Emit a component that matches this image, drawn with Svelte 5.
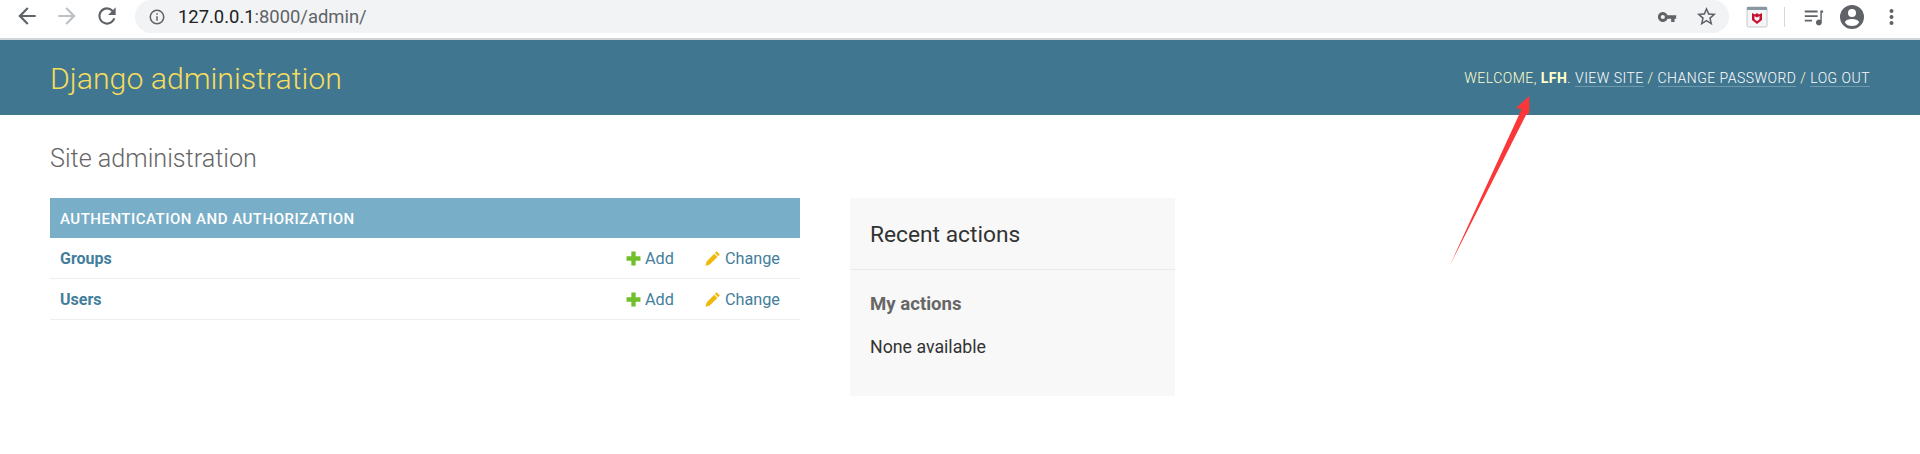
<script>
	const models = ['Groups', 'Users'];
</script>

<div class="page">
	<div class="toolbar">
		<div class="nav">
			<svg class="nav-icon" viewBox="0 0 24 24"><path d="M20 11H7.83l5.59-5.59L12 4l-8 8 8 8 1.41-1.41L7.83 13H20z" fill="#5f6368" /></svg>
			<svg class="nav-icon" viewBox="0 0 24 24"><path d="M12 4l-1.41 1.41L16.17 11H4v2h12.17l-5.58 5.59L12 20l8-8z" fill="#bdc1c6" /></svg>
			<svg class="nav-icon" viewBox="0 0 24 24"><path d="M17.65 6.35A7.96 7.96 0 0 0 12 4a8 8 0 1 0 7.73 10h-2.08A6 6 0 1 1 12 6c1.66 0 3.14.69 4.22 1.78L13 11h7V4z" fill="#5f6368" /></svg>
		</div>
		<div class="omnibox">
			<svg class="info" viewBox="0 0 24 24"><path d="M11 7h2v2h-2zm0 4h2v6h-2zm1-9a10 10 0 1 0 0 20 10 10 0 0 0 0-20zm0 18a8 8 0 1 1 0-16 8 8 0 0 1 0 16z" fill="#5f6368" /></svg>
			<span class="url"><span class="host">127.0.0.1</span>:8000/admin/</span>
			<span class="spacer"></span>
			<svg class="omni-icon" viewBox="0 0 24 24"><path d="M12.65 10A6 6 0 1 0 12.65 14H17v4h4v-4h2v-4zM7 14.5a2.5 2.5 0 1 1 0-5 2.5 2.5 0 0 1 0 5z" fill="#5f6368" /></svg>
			<svg class="omni-icon star" viewBox="0 0 24 24"><path d="M22 9.24l-7.19-.62L12 2 9.19 8.63 2 9.24l5.46 4.73L5.82 21 12 17.27 18.18 21l-1.63-7.03zM12 15.4l-3.76 2.27 1-4.28-3.32-2.88 4.38-.38L12 6.1l1.71 4.04 4.38.38-3.32 2.88 1 4.28z" fill="#5f6368" /></svg>
		</div>
		<div class="extensions">
			<svg class="ext" viewBox="0 0 22 22">
				<rect x="1" y="1" width="20" height="20" rx="1.5" fill="#f4f5f6" stroke="#c4c8cc" />
				<rect x="1" y="1" width="20" height="3" fill="#8a98a4" />
				<path d="M6 7l3 1.5L11 7l2 1.5L16 7v7l-5 4-5-4zM8.5 10v3.2l2.5 2 2.5-2V10L11 11.5z" fill="#c8102e" />
			</svg>
			<span class="divider"></span>
			<svg class="queue" viewBox="0 0 24 24"><path d="M3 5h14v2H3zm0 5h14v2H3zm0 5h8v2H3zM20 5h3v2.4h-1.4V18a3.2 3.2 0 1 1-1.6-2.8z" fill="#5f6368" /></svg>
			<svg class="avatar" viewBox="0 0 24 24"><path d="M12 0a12 12 0 1 0 0 24 12 12 0 0 0 0-24zm0 4a4 4 0 1 1 0 8 4 4 0 0 1 0-8zm0 17c-3 0-5.8-1.4-7-3.6C5 15.2 9.5 14 12 14s7 1.2 7 3.4c-1.2 2.2-4 3.6-7 3.6z" fill="#5f6368" /></svg>
			<svg class="menu" viewBox="0 0 4 18"><circle cx="2" cy="3" r="2" fill="#5f6368" /><circle cx="2" cy="9" r="2" fill="#5f6368" /><circle cx="2" cy="15" r="2" fill="#5f6368" /></svg>
		</div>
	</div>

	<header class="header">
		<div class="branding">Django administration</div>
		<div class="user-tools">
			Welcome, <strong>LFH</strong>.
			<a href="#site">View site</a> /
			<a href="#password">Change password</a> /
			<a href="#logout">Log out</a>
		</div>
	</header>

	<main class="content">
		<h1>Site administration</h1>
		<div class="columns">
			<div class="app-list">
				<div class="caption">Authentication and Authorization</div>
				{#each models as model}
					<div class="row">
						<a class="model" href="#model">{model}</a>
						<a class="action add" href="#add">
							<svg viewBox="0 0 14 14"><path d="M5 0.5h4v4.5h4.5v4H9v4.5H5V9H0.5V5H5z" fill="#70bf2b" /></svg>
							Add
						</a>
						<a class="action change" href="#change">
							<svg viewBox="0 0 14 14"><path d="M10.8.3l3 3-1.5 1.5-3-3zM8.6 2.5l3 3-7.2 7.2-4 1.2 1.1-4z" fill="#efb80b" /></svg>
							Change
						</a>
					</div>
				{/each}
			</div>

			<aside class="recent">
				<h2>Recent actions</h2>
				<div class="recent-body">
					<h3>My actions</h3>
					<p>None available</p>
				</div>
			</aside>
		</div>
	</main>

	<svg class="arrow" viewBox="0 0 90 175"><path d="M-1 170 L70.7 14 L64.7 13.3 L78.3 1 L78.3 18 L75 20 Z" fill="#fb3737" /></svg>
</div>

<style>
	:global(body) {
		margin: 0;
		background: #fff;
	}

	.page {
		position: relative;
		height: 454px;
		overflow: hidden;
		font-family: Roboto, "Liberation Sans", sans-serif;
		color: #333;
	}

	.toolbar {
		display: flex;
		align-items: flex-start;
		height: 38px;
		border-bottom: 2px solid #d2d5d8;
		background: #fff;
	}

	.nav {
		display: flex;
		gap: 14px;
		width: 135px;
		padding: 3px 0 0 14px;
		box-sizing: border-box;
	}

	.nav-icon {
		width: 26px;
		height: 26px;
	}

	.omnibox {
		display: flex;
		align-items: center;
		width: 1594px;
		height: 33px;
		padding: 0 11px 0 13px;
		box-sizing: border-box;
		background: #f1f3f4;
		border-radius: 17px;
	}

	.info {
		width: 18px;
		height: 18px;
		margin-right: 12px;
	}

	.url {
		font-size: 18.4px;
		color: #5f6368;
	}

	.host {
		color: #202124;
	}

	.spacer {
		flex: 1;
	}

	.omni-icon {
		width: 20px;
		height: 20px;
	}

	.star {
		width: 23px;
		height: 23px;
		margin-left: 18px;
	}

	.extensions {
		display: flex;
		align-items: center;
		height: 33px;
		padding-left: 17px;
	}

	.ext {
		width: 22px;
		height: 22px;
	}

	.divider {
		width: 1px;
		height: 20px;
		background: #d5d7da;
		margin: 0 17px 0 16px;
	}

	.queue {
		width: 22px;
		height: 22px;
	}

	.avatar {
		width: 24px;
		height: 24px;
		margin-left: 16px;
	}

	.menu {
		width: 5px;
		height: 18px;
		margin-left: 25px;
	}

	.header {
		display: flex;
		align-items: center;
		justify-content: space-between;
		height: 75px;
		padding: 1px 50px 0;
		background: #417690;
		box-sizing: border-box;
	}

	.branding {
		font-size: 30.25px;
		font-weight: 300;
		color: #f5dd5d;
	}

	.user-tools {
		font-size: 14px;
		font-weight: 300;
		letter-spacing: 0.47px;
		text-transform: uppercase;
		color: #ffc;
	}

	.user-tools strong {
		font-weight: 700;
	}

	.user-tools a {
		color: #fff;
		text-decoration: none;
		border-bottom: 1px solid rgba(255, 255, 255, 0.25);
	}

	.content {
		padding: 27px 50px 0;
	}

	h1 {
		margin: 0 0 23px;
		font-size: 25.2px;
		font-weight: 300;
		line-height: 33px;
		color: #666;
	}

	.columns {
		display: flex;
		gap: 50px;
		align-items: flex-start;
	}

	.app-list {
		width: 750px;
	}

	.caption {
		height: 40px;
		padding: 2px 10px 0;
		box-sizing: border-box;
		line-height: 38px;
		font-size: 15px;
		font-weight: 500;
		letter-spacing: 0.5px;
		text-transform: uppercase;
		color: #fff;
		background: #79aec8;
	}

	.row {
		display: flex;
		align-items: center;
		height: 41px;
		padding: 1px 20px 0 10px;
		border-bottom: 1px solid #eee;
		box-sizing: border-box;
		font-size: 16.25px;
	}

	.row a {
		text-decoration: none;
		color: #447e9b;
	}

	.row .model {
		flex: 1;
		font-weight: 700;
		font-size: 16px;
	}

	.action {
		display: flex;
		align-items: center;
		gap: 4px;
	}

	.action svg {
		width: 15px;
		height: 15px;
	}

	.change {
		gap: 5px;
		margin-left: 31px;
	}

	.recent {
		width: 325px;
		height: 198px;
		background: #f8f8f8;
	}

	h2 {
		margin: 0;
		height: 69px;
		padding: 2px 21px 0 20px;
		line-height: 69px;
		font-size: 22.75px;
		font-weight: 400;
		border-bottom: 1px solid #eaeaea;
		color: #333;
	}

	.recent-body {
		padding: 24px 20px;
	}

	h3 {
		margin: 0 0 23px;
		font-size: 18.6px;
		font-weight: 700;
		line-height: 20px;
		color: #666;
	}

	.recent-body p {
		margin: 0;
		font-size: 17.75px;
		line-height: 20px;
	}

	.arrow {
		position: absolute;
		left: 1451px;
		top: 95px;
		width: 90px;
		height: 175px;
		overflow: visible;
	}
</style>
